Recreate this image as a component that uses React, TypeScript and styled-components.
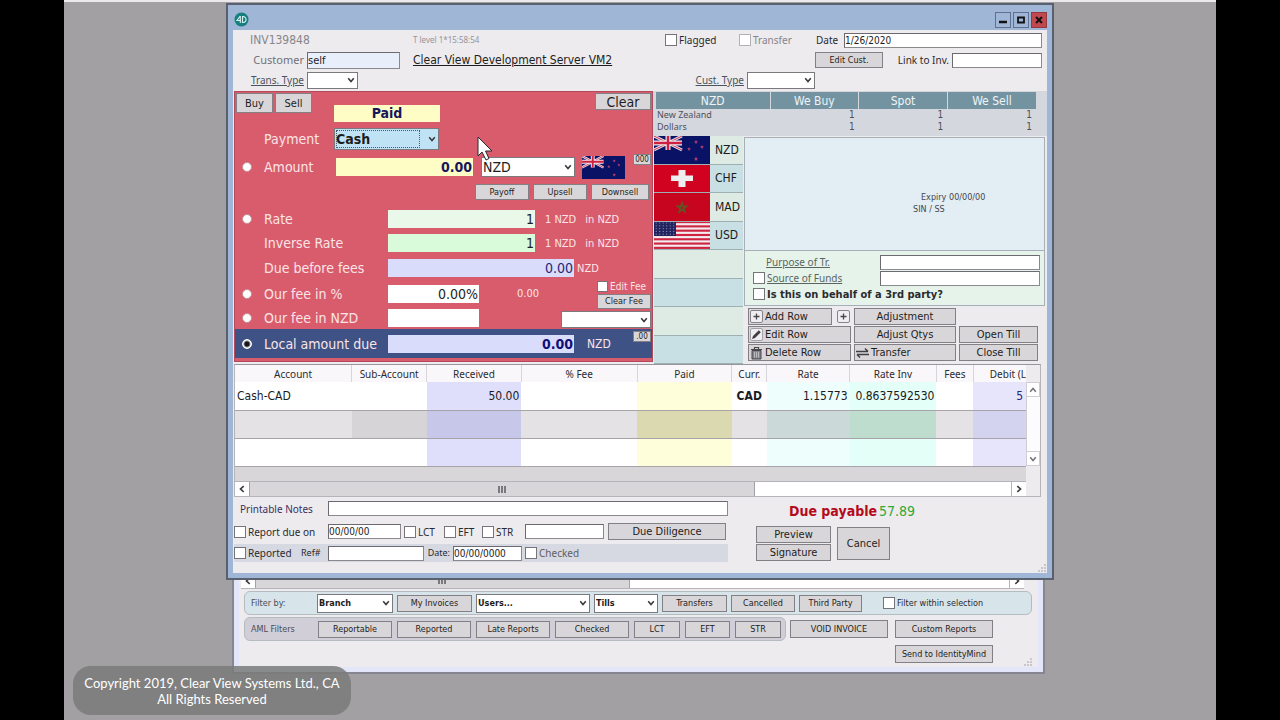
import React from 'react';
import styled, { createGlobalStyle, css } from 'styled-components';

const ui = '"DejaVu Sans Condensed", "DejaVu Sans", sans-serif';
const soft = '"Noto Sans", "Open Sans", sans-serif';

const GlobalStyle = createGlobalStyle`
  *, *::before, *::after { box-sizing: border-box; }
  body { margin: 0; background: #000; font-family: ${ui}; font-size: 11px; color: #1b1b1d; }
  button, input, select { font-family: inherit; margin: 0; }
`;

/* ---------- desktop ---------- */

const Stage = styled.div`
  padding: 0 5%;
  min-height: 100vh;
  display: flex;
`;
const Desktop = styled.main`
  position: relative;
  flex: 1;
  min-height: 720px;
  overflow: hidden;
  background: #a2a0a3;
  border-top: 2px solid #ebe9ec;
`;
const MainWindow = styled.section`
  position: absolute;
  top: 1px;
  left: 162px;
  right: 162px;
  border: 2px solid #59606e;
  background: #9fb6d6;
  padding: 0 5px 5px;
`;
const BackWindow = styled.section`
  position: absolute;
  top: 400px;
  left: 168px;
  right: 171px;
  height: 272px;
  border: 2px solid #85868f;
  background: #e2e6f8;
  padding: 0 5px 5px;
  display: flex;
`;
const TitleBar = styled.header`
  height: 25px;
  display: flex;
  align-items: center;
  gap: 2px;
  padding: 4px 0 0 1px;
`;
const Spacer = styled.div`
  flex: 1;
`;
const WinButton = styled.button<{ $close?: boolean }>`
  width: 16px;
  height: 16px;
  padding: 0;
  display: grid;
  place-items: center;
  border: 1px solid ${p => (p.$close ? '#8e3a3e' : '#5f7193')};
  background: ${p => (p.$close ? '#c1484d' : '#9fb6d6')};
`;
const Body = styled.div`
  background: #edebee;
  display: flex;
  flex-direction: column;
`;
const Grip = styled.svg`
  display: block;
  flex: none;
  align-self: flex-end;
`;

/* ---------- shared controls ---------- */

const Button = styled.button<{ $w?: number; $h?: number; $size?: number }>`
  ${p => p.$w && css`width: ${p.$w}px;`}
  height: ${p => p.$h ?? 16}px;
  flex: none;
  padding: 0;
  display: flex;
  align-items: center;
  justify-content: center;
  border: 1px solid #828085;
  background: #d9d6da;
  color: #1d1d20;
  font-size: ${p => p.$size ?? 9}px;
  line-height: 1;
  white-space: nowrap;
`;
const RowButton = styled(Button)`
  width: auto;
  gap: 2px;
  padding-left: 1px;
  justify-content: flex-start;
`;
const TextBox = styled.input<{ $w?: number; $h?: number; $bg?: string; $size?: number }>`
  ${p => (p.$w ? css`width: ${p.$w}px; flex: none;` : css`flex: 1; min-width: 0;`)}
  height: ${p => p.$h ?? 15}px;
  padding: 0;
  border: 1px solid #8b898e;
  border-top-color: #6c6a70;
  border-left-color: #6c6a70;
  background: ${p => p.$bg ?? '#fff'};
  color: #1d1d20;
  font-size: ${p => p.$size ?? 10}px;
`;
const Amount = styled.input<{ $w: number; $bg: string; $color?: string; $bold?: boolean }>`
  width: ${p => p.$w}px;
  height: 18px;
  flex: none;
  border: 0;
  padding: 0 1px;
  background: ${p => p.$bg};
  color: ${p => p.$color ?? '#1d1d20'};
  font-size: 14px;
  font-weight: ${p => (p.$bold ? 700 : 400)};
  text-align: right;
`;
const SelectFrame = styled.span<{ $w: number; $h: number }>`
  position: relative;
  flex: none;
  display: block;
  width: ${p => p.$w}px;
  height: ${p => p.$h}px;
  svg {
    position: absolute;
    right: 3px;
    top: 50%;
    transform: translateY(-50%);
    pointer-events: none;
  }
`;
const FocusMark = styled.span`
  position: absolute;
  inset: 2px 19px 2px 2px;
  border: 1px dotted #4a5a66;
  pointer-events: none;
`;
const NativeSelect = styled.select<{ $bg?: string; $size?: number; $bold?: boolean }>`
  appearance: none;
  display: block;
  width: 100%;
  height: 100%;
  padding: 0 1px;
  border: 1px solid #7b797e;
  border-radius: 0;
  background: ${p => p.$bg ?? '#fff'};
  color: #1d1d20;
  font-size: ${p => p.$size ?? 11}px;
  font-weight: ${p => (p.$bold ? 700 : 400)};
`;
const Tick = styled.input<{ $s?: number }>`
  appearance: none;
  flex: none;
  width: ${p => p.$s ?? 12}px;
  height: ${p => p.$s ?? 12}px;
  border: 1px solid #76747a;
  background: #fff;
  &:disabled { border-color: #b3b1b6; }
`;
const Radio = styled.input`
  appearance: none;
  flex: none;
  width: 10px;
  height: 10px;
  border: 1px solid #c98d95;
  border-radius: 50%;
  background: #fff;
  &:checked {
    border-color: #fff;
    background: radial-gradient(circle, #16161a 0 2px, #fff 4px);
  }
`;
const Label = styled.label<{ $w?: number; $size?: number; $color?: string; $right?: boolean; $line?: boolean; $bold?: boolean; $tight?: boolean }>`
  ${p => p.$w && css`width: ${p.$w}px;`}
  flex: none;
  font-family: ${p => (p.$tight ? ui : soft)};
  font-size: ${p => p.$size ?? 10}px;
  line-height: 16px;
  color: ${p => p.$color ?? '#2a2a2e'};
  text-align: ${p => (p.$right ? 'right' : 'left')};
  text-decoration: ${p => (p.$line ? 'underline' : 'none')};
  font-weight: ${p => (p.$bold ? 700 : 400)};
  white-space: nowrap;
  padding-right: ${p => (p.$right ? 3 : 0)}px;
`;
const Check = styled.label<{ $w?: number; $color?: string; $size?: number; $bold?: boolean; $tight?: boolean }>`
  ${p => p.$w && css`width: ${p.$w}px;`}
  flex: none;
  display: flex;
  align-items: center;
  gap: 2px;
  font-family: ${p => (p.$tight ? ui : soft)};
  font-size: ${p => p.$size ?? 10}px;
  font-weight: ${p => (p.$bold ? 700 : 400)};
  color: ${p => p.$color ?? '#2a2a2e'};
  white-space: nowrap;
`;

function Chevron({ dir = 'down', size = 8, color = '#3a3a3e' }: { dir?: 'down' | 'up' | 'left' | 'right'; size?: number; color?: string }) {
  const turn = { down: 0, left: 90, up: 180, right: 270 }[dir];
  return (
    <svg width={size} height={size} viewBox="0 0 8 8" aria-hidden="true">
      <path d="M1.200 2.300 4 5.500 6.800 2.300" fill="none" stroke={color} strokeWidth="1.600" transform={`rotate(${turn} 4 4)`} />
    </svg>
  );
}
type SelectProps = { w: number; h: number; id?: string; value?: string; bg?: string; size?: number; bold?: boolean; label?: string; focused?: boolean };
function Select({ w, h, id, value = '', bg, size, bold, label, focused }: SelectProps) {
  return (
    <SelectFrame $w={w} $h={h}>
      <NativeSelect id={id} aria-label={label} $bg={bg} $size={size} $bold={bold} defaultValue={value}>
        <option>{value}</option>
      </NativeSelect>
      {focused && <FocusMark />}
      <Chevron />
    </SelectFrame>
  );
}

/* ---------- flags ---------- */

const star = 'M0-3 .8-1 2.9-.9 1.2.4 1.8 2.5 0 1.3-1.8 2.5-1.2.4-2.9-.9-.8-1Z';
const FlagSvg = styled.svg`
  display: block;
  flex: none;
`;
function NzFlag({ w, h }: { w: number; h: number }) {
  return (
    <FlagSvg width={w} height={h} viewBox="0 0 56 28" preserveAspectRatio="none" role="img" aria-label="New Zealand">
      <rect width="56" height="28" fill="#0a1266" />
      <path d="M0 0 28 14M28 0 0 14" stroke="#e9dfe8" strokeWidth="3" />
      <path d="M0 0 28 14M28 0 0 14" stroke="#c83050" strokeWidth="1" />
      <path d="M14 0V14M0 7H28" stroke="#f1e9ee" strokeWidth="5" />
      <path d="M14 0V14M0 7H28" stroke="#cf2040" strokeWidth="2.5" />
      <g fill="#b0406c">
        <path d={star} transform="translate(42 6) scale(.7)" />
        <path d={star} transform="translate(35 13) scale(.7)" />
        <path d={star} transform="translate(48 11) scale(.7)" />
        <path d={star} transform="translate(42 23) scale(.8)" />
      </g>
    </FlagSvg>
  );
}
const SwissFlag = () => (
  <FlagSvg width="56" height="28" viewBox="0 0 56 28" role="img" aria-label="Switzerland">
    <rect width="56" height="28" fill="#d0021f" />
    <path d="M24.500 6h7v5.500H39v5.500h-7.500v6h-7v-6H17v-5.500h7.500z" fill="#eeeef0" />
  </FlagSvg>
);
const MoroccoFlag = () => (
  <FlagSvg width="56" height="28" viewBox="0 0 56 28" role="img" aria-label="Morocco">
    <rect width="56" height="28" fill="#c8051f" />
    <path d="M28 9.500 31 19 23 13.200H33L25 19Z" fill="none" stroke="#5a5a26" strokeWidth="1.300" />
  </FlagSvg>
);
const UsFlag = () => (
  <FlagSvg width="56" height="28" viewBox="0 0 56 28" role="img" aria-label="United States">
    <rect width="56" height="28" fill="#f3edf1" />
    {[0, 1, 2, 3, 4, 5, 6].map(i => (
      <rect key={i} y={i * 4.3} width="56" height="2.15" fill="#cf2440" />
    ))}
    <rect width="22" height="15" fill="#22245f" />
    {[0, 1, 2, 3, 4].map(r =>
      [0, 1, 2, 3, 4, 5].map(c => <circle key={`${r}${c}`} cx={2.2 + c * 3.5} cy={2 + r * 2.8} r=".6" fill="#8f93bd" />)
    )}
  </FlagSvg>
);

/* ---------- invoice head ---------- */

const HeadRow = styled.div`
  height: 20px;
  display: flex;
  align-items: center;
  padding: 0 5px 0 17px;
`;
const HeadRight = styled.div`
  width: 377px;
  flex: none;
  display: flex;
  align-items: center;
`;
const Head = styled.div`
  padding-bottom: 1px;
`;
const Gap = styled.span<{ $w: number }>`
  flex: none;
  width: ${p => p.$w}px;
`;
const CustomerLink = styled.a`
  color: #1d1d20;
  font-size: 12px;
  margin-left: 13px;
  white-space: nowrap;
`;

function InvoiceHead() {
  return (
    <Head>
      <HeadRow>
        <Label as="span" $w={163} $size={12} $color="#88868b" $tight>INV139848</Label>
        <Label as="span" $size={8} $color="#959398">T level 1*15:58:54</Label>
        <Spacer />
        <HeadRight>
          <Check $w={74}><Tick type="checkbox" />Flagged</Check>
          <Check $w={77} $color="#86848a"><Tick type="checkbox" disabled />Transfer</Check>
          <Label $w={28} htmlFor="date">Date</Label>
          <TextBox id="date" defaultValue="1/26/2020" />
        </HeadRight>
      </HeadRow>
      <HeadRow>
        <Label $w={57} $size={11} $color="#737177" htmlFor="customer" $right>Customer</Label>
        <TextBox id="customer" $w={93} $h={17} $size={11} $bg="#e9eefb" defaultValue="self" />
        <CustomerLink href="#customer">Clear View Development Server VM2</CustomerLink>
        <Spacer />
        <Button $w={68}>Edit Cust.</Button>
        <Label $w={69} $right htmlFor="link">Link to Inv.</Label>
        <TextBox id="link" $w={90} />
      </HeadRow>
      <HeadRow>
        <Label $w={57} $color="#4a545e" $line $right htmlFor="trans">Trans. Type</Label>
        <Select id="trans" w={51} h={17} />
        <Spacer />
        <Label $w={56} $color="#4a545e" $line $right htmlFor="ctype">Cust. Type</Label>
        <Select id="ctype" w={68} h={17} />
        <Gap $w={227} />
      </HeadRow>
    </Head>
  );
}

/* ---------- trade form ---------- */

const Middle = styled.div`
  display: flex;
`;
const Trade = styled.form`
  width: 419px;
  flex: none;
  margin: 0 0 2px 1px;
  border: 1px solid #b34a5c;
  background: #d95c6c;
  color: #fbe4e7;
`;
const TradeRow = styled.div<{ $h: number; $band?: boolean }>`
  height: ${p => p.$h}px;
  display: flex;
  align-items: center;
  padding-left: 7px;
  background: ${p => (p.$band ? '#3f5285' : 'transparent')};
`;
const TradeTop = styled.div`
  height: 33px;
  display: flex;
  align-items: flex-start;
  gap: 2px;
  padding: 1px 1px 0;
`;
const PaidTag = styled.output`
  width: 106px;
  margin: 12px 0 0 20px;
  background: #fffdc6;
  color: #17175c;
  font-size: 14px;
  font-weight: 700;
  line-height: 17px;
  text-align: center;
`;
const Corner = styled.div`
  align-self: flex-start;
  padding: 2px 1px 0 0;
`;
const TradeLabel = styled.label<{ $w: number }>`
  width: ${p => p.$w}px;
  flex: none;
  margin-left: 12px;
  font-size: 14px;
  white-space: nowrap;
`;
const RadioSlot = styled.span`
  width: 10px;
  flex: none;
  display: flex;
`;
const Unit = styled.span<{ $ml: number; $size?: number }>`
  margin-left: ${p => p.$ml}px;
  font-size: ${p => p.$size ?? 12}px;
  white-space: nowrap;
`;
const TradeActions = styled.div`
  height: 25px;
  display: flex;
  gap: 4px;
  justify-content: flex-end;
  padding: 2px 3px 0 0;
`;
const Fees = styled.div`
  display: flex;
  justify-content: space-between;
`;
const FeeSide = styled.div`
  display: flex;
  flex-direction: column;
  align-items: flex-end;
  gap: 2px;
  padding: 0 1px 0 0;
`;
const FeeChoice = styled.div`
  width: 54px;
`;

function TradeForm() {
  return (
    <Trade>
      <TradeTop>
        <Button type="button" $w={37} $h={20} $size={11}>Buy</Button>
        <Button type="button" $w={37} $h={20} $size={11}>Sell</Button>
        <PaidTag>Paid</PaidTag>
        <Spacer />
        <Button type="button" $w={56} $h={17} $size={14}>Clear</Button>
      </TradeTop>
      <TradeRow $h={27}>
        <RadioSlot />
        <TradeLabel $w={70} htmlFor="payment">Payment</TradeLabel>
        <Select id="payment" w={105} h={22} bg="#bfe3f5" size={14} bold value="Cash" focused />
      </TradeRow>
      <TradeRow $h={30}>
        <RadioSlot><Radio type="radio" name="basis" aria-label="Amount basis" /></RadioSlot>
        <TradeLabel $w={72} htmlFor="amount">Amount</TradeLabel>
        <Amount id="amount" $w={137} $bg="#fffdc6" $color="#17175c" $bold defaultValue="0.00" />
        <Gap $w={8} />
        <Select label="Currency" w={94} h={20} size={14} value="NZD" />
        <Gap $w={7} />
        <NzFlag w={43} h={23} />
        <Spacer />
        <Corner><Button type="button" $w={18} $h={11} $size={8}>000</Button></Corner>
      </TradeRow>
      <TradeActions>
        <Button type="button" $w={54}>Payoff</Button>
        <Button type="button" $w={54}>Upsell</Button>
        <Button type="button" $w={58}>Downsell</Button>
      </TradeActions>
      <TradeRow $h={24}>
        <RadioSlot><Radio type="radio" name="basis" aria-label="Rate basis" /></RadioSlot>
        <TradeLabel $w={124} htmlFor="rate">Rate</TradeLabel>
        <Amount id="rate" $w={147} $bg="#e9f8e9" defaultValue="1" />
        <Unit $ml={10} $size={11}>1 NZD</Unit>
        <Unit $ml={9} $size={11}>in NZD</Unit>
      </TradeRow>
      <TradeRow $h={24}>
        <RadioSlot />
        <TradeLabel $w={124} htmlFor="inverse">Inverse Rate</TradeLabel>
        <Amount id="inverse" $w={147} $bg="#d9fbda" defaultValue="1" />
        <Unit $ml={10} $size={11}>1 NZD</Unit>
        <Unit $ml={9} $size={11}>in NZD</Unit>
      </TradeRow>
      <TradeRow $h={26}>
        <RadioSlot />
        <TradeLabel $w={124} htmlFor="before">Due before fees</TradeLabel>
        <Amount id="before" $w={186} $bg="#dadcfc" $color="#26267a" defaultValue="0.00" />
        <Unit $ml={3} $size={11}>NZD</Unit>
      </TradeRow>
      <Fees>
        <div>
          <TradeRow $h={25}>
            <RadioSlot><Radio type="radio" name="basis" aria-label="Percentage fee basis" /></RadioSlot>
            <TradeLabel $w={124} htmlFor="feepct">Our fee in %</TradeLabel>
            <Amount id="feepct" $w={91} $bg="#fff" defaultValue="0.00%" />
            <Unit $ml={38} $size={11}>0.00</Unit>
          </TradeRow>
          <TradeRow $h={23}>
            <RadioSlot><Radio type="radio" name="basis" aria-label="Flat fee basis" /></RadioSlot>
            <TradeLabel $w={124} htmlFor="feenzd">Our fee in NZD</TradeLabel>
            <Amount id="feenzd" $w={91} $bg="#fff" defaultValue="" />
          </TradeRow>
        </div>
        <FeeSide>
          <FeeChoice><Check $color="#fbe4e7" $tight><Tick type="checkbox" $s={11} />Edit Fee</Check></FeeChoice>
          <Button type="button" $w={54} $h={15}>Clear Fee</Button>
          <Select label="Fee type" w={90} h={17} />
        </FeeSide>
      </Fees>
      <TradeRow $h={29} $band>
        <RadioSlot><Radio type="radio" name="basis" aria-label="Local amount basis" defaultChecked /></RadioSlot>
        <TradeLabel $w={124} htmlFor="local">Local amount due</TradeLabel>
        <Amount id="local" $w={186} $bg="#dadcfc" $color="#10107a" $bold defaultValue="0.00" />
        <Unit $ml={13}>NZD</Unit>
        <Spacer />
        <Corner><Button type="button" $w={18} $h={11} $size={8}>.00</Button></Corner>
      </TradeRow>
    </Trade>
  );
}

/* ---------- rates, currencies and actions ---------- */

const Side = styled.div`
  flex: 1;
  min-width: 0;
  display: flex;
  flex-direction: column;
`;
const RateBox = styled.div`
  background: #d5d7df;
  height: 45px;
  padding: 1px 11px 0 3px;
`;
const RateTable = styled.table`
  width: 100%;
  table-layout: fixed;
  border-collapse: collapse;
  th {
    height: 17px;
    padding: 0;
    background: #7393a1;
    color: #eef4f6;
    font-size: 12px;
    font-weight: 400;
  }
  th + th { border-left: 1px solid #d5d7df; }
  td {
    height: 12px;
    padding: 0 4px 0 0;
    font-size: 10px;
    line-height: 12px;
    color: #4f5157;
    text-align: right;
  }
  td:first-child { font-family: ${soft}; font-size: 9px; text-align: left; padding-left: 1px; }
`;
const SideLower = styled.div`
  flex: 1;
  display: flex;
`;
const Currencies = styled.ul`
  width: 90px;
  flex: none;
  margin: 0;
  padding: 0 0 0 1px;
  list-style: none;
  display: flex;
  flex-direction: column;
`;
const Currency = styled.li<{ $alt: boolean }>`
  flex: 1;
  min-height: 28px;
  display: flex;
  align-items: center;
  gap: 5px;
  overflow: hidden;
  background: ${p => (p.$alt ? '#c8e0e3' : '#deebe4')};
  border-bottom: 1px solid #9fb0b2;
  font-size: 12px;
`;
const Details = styled.div`
  flex: 1;
  min-width: 0;
  display: flex;
  flex-direction: column;
  padding: 1px 2px 0 1px;
`;
const Identity = styled.div`
  height: 114px;
  border: 1px solid #a9afb6;
  background: #e2edf4;
  display: flex;
  flex-direction: column;
  justify-content: flex-end;
  padding: 0 0 35px 168px;
  font-size: 9px;
  line-height: 12px;
  color: #45484e;
  span:first-child { padding-left: 8px; }
`;
const Compliance = styled.div`
  height: 55px;
  border: 1px solid #a9afb6;
  border-top: 0;
  background: #e6f3ea;
  padding: 3px 4px 0 8px;
`;
const ComplianceRow = styled.div`
  height: 16px;
  display: flex;
  align-items: center;
`;
const Actions = styled.div`
  display: grid;
  grid-template-columns: 84px 16px 102px 1fr;
  column-gap: 3px;
  row-gap: 1px;
  padding: 2px 7px 0 4px;
  button { height: 17px; width: auto; }
`;
const Wide = styled(RowButton)`
  grid-column: span 2;
`;
const Square = styled.button`
  justify-self: center;
  padding: 0;
  border: 0;
  background: none;
  display: flex;
  align-items: center;
`;
const Blank = styled.span``;

const PlusIcon = () => (
  <svg width="13" height="13" viewBox="0 0 13 13" aria-hidden="true">
    <rect x=".5" y=".5" width="12" height="12" rx="1.500" fill="#efedf0" stroke="#86848a" />
    <path d="M6.500 3.500v6M3.500 6.500h6" stroke="#47464b" strokeWidth="1.300" />
  </svg>
);
const PencilIcon = () => (
  <svg width="13" height="13" viewBox="0 0 13 13" aria-hidden="true">
    <rect x=".5" y=".5" width="12" height="12" rx="1.500" fill="#efedf0" stroke="#a3a1a6" />
    <path d="M2 11 3 8 8.800 2.200 10.800 4.200 5 10Z" fill="#3f3e43" />
  </svg>
);
const BinIcon = () => (
  <svg width="13" height="14" viewBox="0 0 13 14" aria-hidden="true">
    <path d="M1 3.500h11M4.500 3V1.500h4V3" fill="none" stroke="#47464b" strokeWidth="1.200" />
    <path d="M2 4.500h9v8.500H2z" fill="#85838a" stroke="#47464b" />
    <path d="M4.500 6v5.500M6.500 6v5.500M8.500 6v5.500" stroke="#c8c6ca" strokeWidth=".8" />
  </svg>
);
const SwapIcon = () => (
  <svg width="13" height="12" viewBox="0 0 13 12" aria-hidden="true">
    <path d="M0 4.500h12M9 1.500l3 3M13 7.500H1M4 10.500 1 7.500" fill="none" stroke="#3f3e43" strokeWidth="1.500" />
  </svg>
);

const currencies = [
  { code: 'NZD', flag: <NzFlag w={56} h={28} /> },
  { code: 'CHF', flag: <SwissFlag /> },
  { code: 'MAD', flag: <MoroccoFlag /> },
  { code: 'USD', flag: <UsFlag /> },
  null, null, null, null,
];

function SidePanel() {
  return (
    <Side>
      <RateBox>
        <RateTable>
          <colgroup><col width="30%" /><col /><col /><col /></colgroup>
          <thead><tr><th>NZD</th><th>We Buy</th><th>Spot</th><th>We Sell</th></tr></thead>
          <tbody>
            <tr><td>New Zealand</td><td>1</td><td>1</td><td>1</td></tr>
            <tr><td>Dollars</td><td>1</td><td>1</td><td>1</td></tr>
          </tbody>
        </RateTable>
      </RateBox>
      <SideLower>
        <Currencies>
          {currencies.map((c, i) => <Currency key={i} $alt={i % 2 === 1}>{c?.flag}{c?.code}</Currency>)}
        </Currencies>
        <Details>
          <Identity><span>Expiry 00/00/00</span><span>SIN / SS</span></Identity>
          <Compliance>
            <ComplianceRow>
              <Gap $w={13} /><Label $color="#5b6560" $line htmlFor="purpose">Purpose of Tr.</Label>
              <Spacer /><TextBox id="purpose" $w={160} />
            </ComplianceRow>
            <ComplianceRow>
              <Tick type="checkbox" id="source" /><Gap $w={2} />
              <Label $color="#5b6560" $line htmlFor="source">Source of Funds</Label>
              <Spacer /><TextBox aria-label="Source of Funds" $w={160} />
            </ComplianceRow>
            <ComplianceRow>
              <Check $bold $tight $size={11}><Tick type="checkbox" />Is this on behalf of a 3rd party?</Check>
            </ComplianceRow>
          </Compliance>
          <Actions>
            <RowButton $size={11}><PlusIcon />Add Row</RowButton>
            <Square aria-label="Add"><PlusIcon /></Square>
            <Button $size={11}>Adjustment</Button>
            <Blank />
            <Wide $size={11}><PencilIcon />Edit Row</Wide>
            <Button $size={11}>Adjust Qtys</Button>
            <Button $size={11}>Open Till</Button>
            <Wide $size={11}><BinIcon />Delete Row</Wide>
            <RowButton $size={11}><SwapIcon />Transfer</RowButton>
            <Button $size={11}>Close Till</Button>
          </Actions>
        </Details>
      </SideLower>
    </Side>
  );
}

/* ---------- ledger ---------- */

const Ledger = styled.div`
  margin: 0 6px 0 1px;
  border: 1px solid #b6b4b9;
  border-top-color: #98969c;
`;
const LedgerMain = styled.div`
  display: flex;
`;
const LedgerTable = styled.table`
  flex: 1;
  min-width: 0;
  table-layout: fixed;
  border-collapse: collapse;
  background: #fff;
  th {
    height: 17px;
    padding: 0;
    background: #f9f7fa;
    border-right: 1px solid #d7d5d9;
    font-family: ${soft};
    font-size: 10px;
    font-weight: 400;
    color: #2b2b2f;
    overflow: hidden;
    white-space: nowrap;
  }
  th:last-child { border-right: 0; text-align: left; padding-left: 16px; }
  td:last-child { overflow: hidden; text-align: left; padding: 0 0 0 43px; color: #26267a; }
`;
const LedgerCell = styled.td<{ $bg: string; $align?: string; $bold?: boolean }>`
  height: 28px;
  padding: 0 2px;
  border-bottom: 1px solid #a6a4a9;
  background: ${p => p.$bg};
  font-size: 12px;
  font-weight: ${p => (p.$bold ? 700 : 400)};
  text-align: ${p => p.$align ?? 'left'};
  white-space: nowrap;
`;
const TotalCell = styled.td`
  height: 15px;
  padding: 0;
  background: #d8d6d9;
`;
const VScroll = styled.div`
  width: 14px;
  flex: none;
  display: flex;
  flex-direction: column;
  justify-content: space-between;
  padding: 17px 0 15px;
  background: #edebee;
`;
const VButton = styled.button`
  height: 15px;
  padding: 0;
  border: 1px solid #d0ced2;
  background: #fff;
  display: grid;
  place-items: center;
`;
const VTrack = styled.div`
  flex: 1;
  background: #fcfbfd;
  border-left: 1px solid #d0ced2;
`;
const HScroll = styled.div`
  height: 15px;
  display: flex;
  margin-right: 14px;
  background: #fff;
  border-top: 1px solid #b6b4b9;
`;
const HButton = styled.button`
  width: 14px;
  padding: 0;
  border: 0;
  background: #fff;
  display: grid;
  place-items: center;
`;
const HThumb = styled.div<{ $grow: number }>`
  flex: ${p => p.$grow} 1 0;
  border: 1px solid #a3a1a6;
  border-width: 0 1px;
  background: #d8d6d9;
  display: grid;
  place-items: center;
`;
const HTrack = styled.div<{ $grow: number }>`
  flex: ${p => p.$grow} 1 0;
  border-right: 1px solid #b6b4b9;
`;
const Bars = () => (
  <svg width="8" height="7" viewBox="0 0 8 7" aria-hidden="true">
    <path d="M1 0v7M4 0v7M7 0v7" stroke="#5c5a60" strokeWidth="1.500" />
  </svg>
);

const columns = [
  { name: 'Account', w: 117, light: '#fff', dark: '#e4e2e5', value: 'Cash-CAD' },
  { name: 'Sub-Account', w: 75, light: '#fff', dark: '#d6d4d7' },
  { name: 'Received', w: 95, light: '#dfdffb', dark: '#c7c7ea', value: '50.00', align: 'right' },
  { name: '% Fee', w: 116, light: '#fff', dark: '#e4e2e5' },
  { name: 'Paid', w: 95, light: '#fefedb', dark: '#dbd9b0' },
  { name: 'Curr.', w: 35, light: '#fff', dark: '#e4e2e5', value: 'CAD', align: 'center', bold: true },
  { name: 'Rate', w: 83, light: '#eefefd', dark: '#ccd9d9', value: '1.15773', align: 'right' },
  { name: 'Rate Inv', w: 87, light: '#e4fef8', dark: '#bfddcf', value: '0.8637592530', align: 'right' },
  { name: 'Fees', w: 37, light: '#fff', dark: '#e4e2e5' },
  { name: 'Debit (L', w: 52, light: '#e6e5fb', dark: '#d3d3ef', value: '5' },
];
const total = columns.reduce((sum, c) => sum + c.w, 0);

function LedgerPanel() {
  return (
    <Ledger>
      <LedgerMain>
        <LedgerTable>
          <colgroup>{columns.map(c => <col key={c.name} style={{ width: `${(c.w / total) * 100}%` }} />)}</colgroup>
          <thead><tr>{columns.map(c => <th key={c.name}>{c.name}</th>)}</tr></thead>
          <tbody>
            {[0, 1, 2].map(r => (
              <tr key={r}>
                {columns.map(c => (
                  <LedgerCell key={c.name} $bg={r === 1 ? c.dark : c.light} $align={c.align} $bold={c.bold}>
                    {r === 0 ? c.value : ''}
                  </LedgerCell>
                ))}
              </tr>
            ))}
            <tr><TotalCell colSpan={9} /><TotalCell /></tr>
          </tbody>
        </LedgerTable>
        <VScroll>
          <VButton aria-label="Scroll up"><Chevron dir="up" color="#77757b" /></VButton>
          <VTrack />
          <VButton aria-label="Scroll down"><Chevron color="#77757b" /></VButton>
        </VScroll>
      </LedgerMain>
      <HScroll>
        <HButton aria-label="Scroll left"><Chevron dir="left" /></HButton>
        <HThumb $grow={506}><Bars /></HThumb>
        <HTrack $grow={257} />
        <HButton aria-label="Scroll right"><Chevron dir="right" /></HButton>
      </HScroll>
    </Ledger>
  );
}

/* ---------- invoice foot ---------- */

const Foot = styled.div`
  display: flex;
  height: 76px;
  padding-left: 1px;
`;
const FootForm = styled.div`
  width: 494px;
  flex: none;
  padding-top: 1px;
`;
const FootRow = styled.div<{ $h: number; $tint?: boolean }>`
  height: ${p => p.$h}px;
  display: flex;
  align-items: center;
  background: ${p => (p.$tint ? '#d6d9e2' : 'transparent')};
`;
const FootSide = styled.div`
  flex: 1;
  padding: 5px 0 0 28px;
`;
const Due = styled.div`
  display: flex;
  gap: 2px;
  padding-left: 33px;
  font-size: 14px;
  line-height: 18px;
  color: #2fa836;
  strong { color: #b30a1c; }
`;
const FootButtons = styled.div`
  display: flex;
  align-items: center;
  gap: 6px;
  margin-top: 6px;
`;
const Stack = styled.div`
  display: flex;
  flex-direction: column;
  gap: 1px;
`;

function InvoiceFoot() {
  return (
    <Foot>
      <FootForm>
        <FootRow $h={21}>
          <Gap $w={6} />
          <Label $w={88} $color="#3a2f5e" htmlFor="notes">Printable Notes</Label>
          <TextBox id="notes" />
        </FootRow>
        <FootRow $h={25}>
          <Check $w={94}><Tick type="checkbox" />Report due on</Check>
          <TextBox aria-label="Report due date" $w={73} defaultValue="00/00/00" /><Gap $w={3} />
          <Check $w={40}><Tick type="checkbox" />LCT</Check>
          <Check $w={38}><Tick type="checkbox" />EFT</Check>
          <Check $w={43}><Tick type="checkbox" />STR</Check>
          <TextBox aria-label="Report details" $w={79} />
          <Gap $w={4} />
          <Button $w={118} $h={17} $size={11}>Due Diligence</Button>
        </FootRow>
        <FootRow $h={18} $tint>
          <Check $w={67}><Tick type="checkbox" />Reported</Check>
          <Label $w={27} $size={9} htmlFor="ref">Ref#</Label>
          <TextBox id="ref" $w={96} />
          <Label $w={29} $size={9} $right htmlFor="refdate">Date:</Label>
          <TextBox id="refdate" $w={69} defaultValue="00/00/0000" />
          <Gap $w={3} />
          <Check $color="#5f5d64"><Tick type="checkbox" />Checked</Check>
        </FootRow>
      </FootForm>
      <FootSide>
        <Due><strong>Due payable</strong><span>57.89</span></Due>
        <FootButtons>
          <Stack>
            <Button $w={75} $h={17} $size={11}>Preview</Button>
            <Button $w={75} $h={17} $size={11}>Signature</Button>
          </Stack>
          <Button $w={53} $h={33} $size={11}>Cancel</Button>
        </FootButtons>
      </FootSide>
      <Grip width="10" height="10" viewBox="0 0 10 10" aria-hidden="true">
        <path d="M7 2h2M4 5h2M7 5h2M1 8h2M4 8h2M7 8h2" stroke="#bdbbc0" strokeWidth="1.500" />
      </Grip>
    </Foot>
  );
}

/* ---------- invoice list window ---------- */

const BackBody = styled.div`
  flex: 1;
  min-width: 0;
  display: flex;
  flex-direction: column;
  justify-content: flex-end;
  background: #edebee;
  padding: 0 5px 0 2px;
`;
const BackScroll = styled(HScroll)`
  height: 17px;
  margin: 0 9px 2px 0;
  border-bottom: 1px solid #b6b4b9;
`;
const Bar = styled.div<{ $aml?: boolean }>`
  height: 24px;
  display: flex;
  align-items: center;
  gap: 5px;
  padding: 0 4px 0 6px;
  border: 1px solid #b3bcc1;
  border-radius: 6px;
  background: ${p => (p.$aml ? '#d2ced8' : '#d7e4ea')};
`;
const Filter = styled(Bar)`
  margin: 0 1px 0 3px;
  gap: 4px;
`;
const AmlRow = styled.div`
  display: flex;
  align-items: center;
  gap: 4px;
  margin: 2px 0 0 3px;
`;
const SendRow = styled.div`
  display: flex;
  height: 26px;
  padding: 4px 0 0 654px;
`;
const Reports = styled.div`
  margin-left: 3px;
`;

function InvoiceListWindow() {
  return (
    <BackWindow aria-label="Invoice list">
      <BackBody>
        <BackScroll>
          <HButton aria-label="Scroll left"><Chevron dir="left" /></HButton>
          <HThumb $grow={374}><Bars /></HThumb>
          <HTrack $grow={381} />
          <HButton aria-label="Scroll right"><Chevron dir="right" /></HButton>
        </BackScroll>
        <Filter>
          <Label as="span" $w={62} $size={9} $color="#4a4c52" $tight>Filter by:</Label>
          <Select label="Branch" w={76} h={19} size={9} bold value="Branch" />
          <Button $w={75} $h={17}>My Invoices</Button>
          <Select label="Users" w={114} h={19} size={9} bold value="Users..." />
          <Select label="Tills" w={64} h={19} size={9} bold value="Tills" />
          <Button $w={65} $h={17}>Transfers</Button>
          <Button $w={64} $h={17}>Cancelled</Button>
          <Button $w={63} $h={17}>Third Party</Button>
          <Gap $w={13} />
          <Check $size={9} $tight><Tick type="checkbox" />Filter within selection</Check>
        </Filter>
        <AmlRow>
          <Bar $aml>
            <Label as="span" $w={62} $size={9} $color="#4a4c52" $tight>AML Filters</Label>
            <Button $w={74} $h={17}>Reportable</Button>
            <Button $w={74} $h={17}>Reported</Button>
            <Button $w={74} $h={17}>Late Reports</Button>
            <Button $w={74} $h={17}>Checked</Button>
            <Button $w={46} $h={17}>LCT</Button>
            <Button $w={45} $h={17}>EFT</Button>
            <Button $w={46} $h={17}>STR</Button>
          </Bar>
          <Button $w={98} $h={18}>VOID INVOICE</Button>
          <Reports><Button $w={98} $h={18}>Custom Reports</Button></Reports>
        </AmlRow>
        <SendRow>
          <Button $w={98} $h={18}>Send to IdentityMind</Button>
          <Spacer />
          <Grip width="10" height="10" viewBox="0 0 10 10" aria-hidden="true">
            <path d="M7 2h2M4 5h2M7 5h2M1 8h2M4 8h2M7 8h2" stroke="#bdbbc0" strokeWidth="1.500" />
          </Grip>
        </SendRow>
      </BackBody>
    </BackWindow>
  );
}

/* ---------- overlays ---------- */

const Copyright = styled.p`
  position: absolute;
  left: 9px;
  top: 664px;
  width: 278px;
  margin: 0;
  padding: 9px 0 8px;
  border-radius: 18px;
  background: rgba(122, 122, 122, 0.85);
  color: #fff;
  font-family: Lato, sans-serif;
  font-size: 13px;
  line-height: 16px;
  text-align: center;
`;
const Pointer = styled.svg`
  position: absolute;
  left: 413px;
  top: 134px;
`;

export default function App() {
  return (
    <Stage>
      <GlobalStyle />
      <Desktop>
        <InvoiceListWindow />
        <MainWindow aria-label="Invoice">
          <TitleBar>
            <svg width="15" height="15" viewBox="0 0 15 15" role="img" aria-label="4D">
              <circle cx="7.500" cy="7.500" r="7" fill="#17807f" />
              <path d="M6.300 4 3 8.500H7M6.300 4V11M8.500 4.500V10.500C13.500 11 13 4 8.500 4.500Z" fill="none" stroke="#d9f3f0" strokeWidth="1.100" />
            </svg>
            <Spacer />
            <WinButton aria-label="Minimise"><svg width="10" height="10"><path d="M1 7h8" stroke="#111" strokeWidth="2.500" /></svg></WinButton>
            <WinButton aria-label="Maximise"><svg width="10" height="10"><path d="M2 2.500h6v5H2z" fill="none" stroke="#111" strokeWidth="1.800" /></svg></WinButton>
            <WinButton aria-label="Close" $close><svg width="10" height="10"><path d="M2 2l6 6M8 2 2 8" stroke="#111" strokeWidth="2" /></svg></WinButton>
          </TitleBar>
          <Body>
            <InvoiceHead />
            <Middle>
              <TradeForm />
              <SidePanel />
            </Middle>
            <LedgerPanel />
            <InvoiceFoot />
          </Body>
        </MainWindow>
        <Copyright>Copyright 2019, Clear View Systems Ltd., CA<br />All Rights Reserved</Copyright>
        <Pointer width="16" height="27" viewBox="0 0 16 27" aria-hidden="true">
          <path d="M1 1v19l4-4 4 8 3-1.500-3.500-7.500H15Z" fill="#fff" stroke="#2a2a2e" strokeLinejoin="round" />
        </Pointer>
      </Desktop>
    </Stage>
  );
}
